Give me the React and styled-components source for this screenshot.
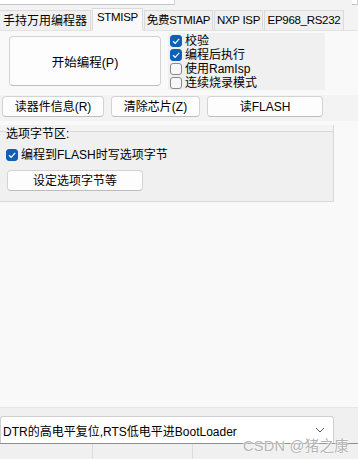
import React from 'react'
import styled, { createGlobalStyle } from 'styled-components'

const GlobalStyle = createGlobalStyle`
   html, body {
      margin: 0;
      padding: 0;
      background: #f9f9f9;
   }
   * {
      box-sizing: border-box;
   }
`

const tabs = [
   { label: '手持万用编程器', width: 91 },
   { label: 'STMISP', width: 51, active: true },
   { label: '免费STMIAP', width: 69 },
   { label: 'NXP ISP', width: 49 },
   { label: 'EP968_RS232', width: 80 },
]

const options = [
   { label: '校验', checked: true },
   { label: '编程后执行', checked: true },
   { label: '使用RamIsp', checked: false },
   { label: '连续烧录模式', checked: false },
]

const CheckBox = ({ checked, label }) => (
   <CheckRow>
      <Box $checked={checked}>
         {checked && (
            <svg width="10" height="10" viewBox="0 0 10 10">
               <path d="M2 5.2 L4.2 7.3 L8.2 2.8" fill="none" stroke="#fff" strokeWidth="1.2" />
            </svg>
         )}
      </Box>
      <CheckText>{label}</CheckText>
   </CheckRow>
)

const App = () => {
   return (
      <>
         <GlobalStyle />
         <Page>
            <TopStub>
               <StubBox $width={175} />
               <StubBox $width={6} />
            </TopStub>

            <TabBar>
               {tabs.map((t) => (
                  <Tab key={t.label} $active={t.active} $width={t.width}>
                     {t.label}
                  </Tab>
               ))}
            </TabBar>

            <TopArea>
               <BigButton>开始编程(P)</BigButton>
               <OptionPanel>
                  {options.map((o) => (
                     <CheckBox key={o.label} {...o} />
                  ))}
               </OptionPanel>
            </TopArea>

            <ButtonRow>
               <Button $width={102}>读器件信息(R)</Button>
               <Button $width={89}>清除芯片(Z)</Button>
               <Button $width={116}>读FLASH</Button>
            </ButtonRow>

            <GroupBox>
               <Legend>选项字节区:</Legend>
               <GroupCheck>
                  <CheckBox checked label="编程到FLASH时写选项字节" />
               </GroupCheck>
               <Button $width={136}>设定选项字节等</Button>
            </GroupBox>

            <Spacer />

            <BottomPanel>
               <Combo>
                  <span>DTR的高电平复位,RTS低电平进BootLoader</span>
                  <svg width="10" height="6" viewBox="0 0 10 6">
                     <path d="M1 1 L5 5 L9 1" fill="none" stroke="#555" strokeWidth="1" />
                  </svg>
               </Combo>
               <ComboSide />
            </BottomPanel>

            <StatusBar>
               <StatusCell $width={93} />
               <StatusCell $width={100} />
               <StatusCell $width={165} $last />
               <Watermark>CSDN @猪之康</Watermark>
            </StatusBar>
         </Page>
      </>
   )
}

const Page = styled.div`
   width: 358px;
   height: 459px;
   overflow: hidden;
   display: flex;
   flex-direction: column;
   background: #f9f9f9;
   font-family: 'Liberation Sans', 'Noto Sans CJK SC', sans-serif;
   font-size: 12px;
   color: #000;
`

const TopStub = styled.div`
   height: 9px;
   display: flex;
   justify-content: space-between;
   background: #f3f3f3;
`

const StubBox = styled.div`
   width: ${({ $width }) => $width}px;
   height: 5px;
   background: #fff;
   border-bottom: 1px solid #c4c4c4;
   border-right: 1px solid #d6d6d6;
`

const TabBar = styled.div`
   height: 22px;
   display: flex;
   align-items: flex-end;
   gap: 1px;
   background: #f3f3f3;
   border-bottom: 1px solid #e2e2e2;
`

const Tab = styled.div`
   width: ${({ $width }) => $width}px;
   flex-shrink: 0;
   height: ${({ $active }) => ($active ? 23 : 20)}px;
   padding-bottom: ${({ $active }) => ($active ? 4 : 0)}px;
   display: flex;
   align-items: center;
   justify-content: center;
   line-height: 1;
   white-space: nowrap;
   font-size: 11.5px;
   letter-spacing: -0.3px;
   background: ${({ $active }) => ($active ? '#f9f9f9' : '#f0f0f0')};
   border: 1px solid #dadada;
   border-bottom: ${({ $active }) => ($active ? '1px solid #f9f9f9' : 'none')};
   margin-bottom: ${({ $active }) => ($active ? -1 : 0)}px;
   &:first-child {
      border-left: none;
      font-size: 12px;
      letter-spacing: 0;
   }
`

const TopArea = styled.div`
   display: flex;
   align-items: flex-start;
   padding: 2px 0 0 9px;
   gap: 7px;
   height: 62px;
`

const BigButton = styled.button`
   margin-top: 3px;
   width: 152px;
   height: 50px;
   background: #fdfdfd;
   border: 1px solid #d3d3d3;
   border-bottom-color: #bdbdbd;
   border-radius: 4px;
   font: inherit;
   font-size: 12.5px;
   color: #000;
   padding: 0;
`

const OptionPanel = styled.div`
   width: 157px;
   height: 57px;
   background: #f0f0f0;
   display: flex;
   flex-direction: column;
   padding: 1px 0 0 2px;
`

const CheckRow = styled.label`
   display: flex;
   align-items: center;
   gap: 3px;
   height: 14px;
   white-space: nowrap;
`

const CheckText = styled.span`
   line-height: 14px;
   font-size: 12px;
`

const Box = styled.span`
   width: 12px;
   height: 12px;
   border-radius: 3px;
   display: inline-flex;
   align-items: center;
   justify-content: center;
   background: ${({ $checked }) => ($checked ? '#0f5fb5' : '#f7f7f7')};
   border: 1px solid ${({ $checked }) => ($checked ? '#0f5fb5' : '#8a8a8a')};
   flex-shrink: 0;
`

const ButtonRow = styled.div`
   display: flex;
   gap: 7px;
   padding: 3px 0 0 2px;
   height: 32px;
   background: linear-gradient(#f9f9f9 0 2px, #f3f3f3 2px 28px, #f9f9f9 28px);
`

const Button = styled.button`
   width: ${({ $width }) => $width}px;
   height: 21px;
   padding: 0;
   background: #fdfdfd;
   border: 1px solid #d3d3d3;
   border-bottom-color: #bdbdbd;
   border-radius: 4px;
   font: inherit;
   font-size: 12px;
   line-height: 1;
   color: #000;
`

const GroupBox = styled.div`
   width: 334px;
   height: 77px;
   background: #f0f0f0;
   border-right: 1px solid #d8d8d8;
   border-bottom: 1px solid #d8d8d8;
   box-shadow: inset 0 6px 0 #f3f3f3, inset 0 7px 0 #d8d8d8;
   padding: 0 0 0 7px;
   display: flex;
   flex-direction: column;
   align-items: flex-start;
`

const Legend = styled.div`
   background: #f0f0f0;
   padding: 2px 1px 0 0;
   line-height: 14px;
   margin-left: -1px;
`

const GroupCheck = styled.div`
   margin: 7px 0 8px -1px;
`

const Spacer = styled.div`
   flex: 1;
   border-bottom: 1px solid #e6e6e6;
`

const BottomPanel = styled.div`
   height: 35px;
   display: flex;
   align-items: flex-end;
   background: #f0f0f0;
`

const Combo = styled.div`
   width: 334px;
   height: 27px;
   background: #fff;
   border: 1px solid #cfcfcf;
   border-bottom: none;
   border-radius: 3px 3px 0 0;
   display: flex;
   align-items: center;
   justify-content: space-between;
   padding: 0 8px 0 2px;
   white-space: nowrap;
`

const ComboSide = styled.div`
   flex: 1;
`

const StatusBar = styled.div`
   position: relative;
   height: 16px;
   display: flex;
   background: #f0f0f0;
   border-top: 1px solid #8f8f8f;
`

const StatusCell = styled.div`
   width: ${({ $width }) => $width}px;
   border-right: ${({ $last }) => ($last ? 'none' : '1px solid #dcdcdc')};
`

const Watermark = styled.div`
   position: absolute;
   left: 243px;
   top: -10px;
   font-size: 14.5px;
   color: #b4b4b4;
   letter-spacing: 0.3px;
   text-shadow: 0 0 2px #fff, 0 0 2px #fff;
   white-space: nowrap;
`

export default App
